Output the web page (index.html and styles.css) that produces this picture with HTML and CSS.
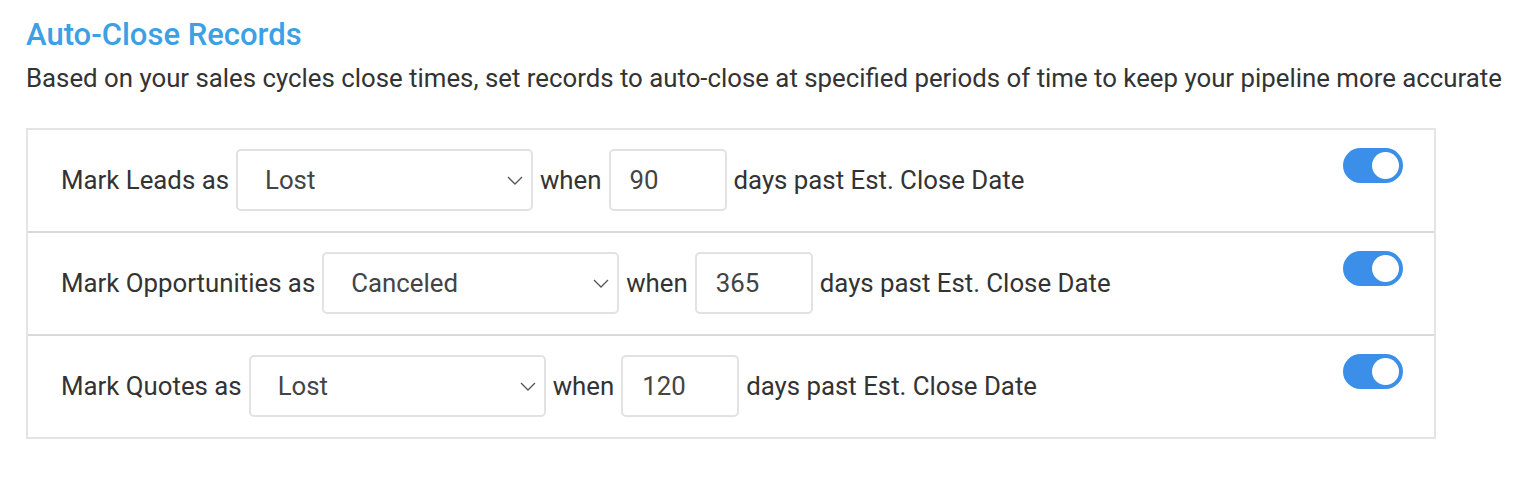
FILE: index.html
```html
<!DOCTYPE html>
<html lang="en">
<head>
<meta charset="utf-8">
<title>Auto-Close Records</title>
<link rel="stylesheet" href="styles.css">
</head>
<body>
<section class="settings">
  <h2 class="settings-title">Auto-Close Records</h2>
  <p class="settings-desc">Based on your sales cycles close times, set records to auto-close at specified periods of time to keep your pipeline more accurate</p>

  <div class="rules">
    <div class="rule">
      <div class="rule-line">
        <span class="rule-text">Mark Leads as</span>
        <div class="select">
          <span class="select-value">Lost</span>
          <svg class="chevron" viewBox="0 0 16 9" width="16" height="9"><path d="M1 1l7 7 7-7" fill="none" stroke="#555" stroke-width="1.3"/></svg>
        </div>
        <span class="rule-text">when</span>
        <div class="num-input">90</div>
        <span class="rule-text">days past Est. Close Date</span>
      </div>
      <span class="toggle on"><span class="knob"></span></span>
    </div>

    <div class="rule">
      <div class="rule-line">
        <span class="rule-text">Mark Opportunities as</span>
        <div class="select">
          <span class="select-value">Canceled</span>
          <svg class="chevron" viewBox="0 0 16 9" width="16" height="9"><path d="M1 1l7 7 7-7" fill="none" stroke="#555" stroke-width="1.3"/></svg>
        </div>
        <span class="rule-text">when</span>
        <div class="num-input">365</div>
        <span class="rule-text">days past Est. Close Date</span>
      </div>
      <span class="toggle on"><span class="knob"></span></span>
    </div>

    <div class="rule">
      <div class="rule-line">
        <span class="rule-text">Mark Quotes as</span>
        <div class="select">
          <span class="select-value">Lost</span>
          <svg class="chevron" viewBox="0 0 16 9" width="16" height="9"><path d="M1 1l7 7 7-7" fill="none" stroke="#555" stroke-width="1.3"/></svg>
        </div>
        <span class="rule-text">when</span>
        <div class="num-input">120</div>
        <span class="rule-text">days past Est. Close Date</span>
      </div>
      <span class="toggle on"><span class="knob"></span></span>
    </div>
  </div>
</section>
</body>
</html>
```

FILE: styles.css
```css
html, body {
  margin: 0;
  background: #fff;
}

body {
  font-family: Roboto, "Liberation Sans", Arial, sans-serif;
  color: #333;
}

.settings {
  padding: 17px 26px 0;
  width: 1410px;
}

.settings-title {
  margin: 0;
  font-size: 31px;
  font-weight: 500;
  line-height: 36px;
  color: #3ca0e5;
}

.settings-desc {
  margin: 9px 0 0;
  font-size: 25.8px;
  line-height: 32px;
  color: #333;
  white-space: nowrap;
}

.rules {
  margin-top: 34px;
  border: 2px solid #e4e4e4;
}

.rule {
  display: flex;
  justify-content: space-between;
  align-items: flex-start;
  height: 101px;
  padding: 0 31px 0 33px;
  border-top: 2px solid #d9d9d9;
}

.rule:first-child {
  border-top: none;
}

.rule-line {
  display: flex;
  align-items: center;
  gap: 7px;
  padding-top: 19px;
}

.rule-text {
  font-size: 25.8px;
  color: #333;
}

.select {
  display: flex;
  align-items: center;
  justify-content: space-between;
  box-sizing: border-box;
  width: 297px;
  height: 62px;
  padding: 0 8px 0 27px;
  border: 2px solid #e2e2e2;
  border-radius: 5px;
  font-size: 25.8px;
  color: #444;
}

.chevron {
  display: block;
}

.num-input {
  display: flex;
  align-items: center;
  box-sizing: border-box;
  width: 118px;
  height: 62px;
  padding: 0 19px;
  border: 2px solid #e2e2e2;
  border-radius: 5px;
  font-size: 25.8px;
  color: #444;
}

.toggle {
  position: relative;
  display: block;
  width: 60px;
  height: 35px;
  margin-top: 18px;
  border-radius: 18px;
  background: #3b8fe8;
}

.toggle .knob {
  position: absolute;
  top: 4px;
  right: 4px;
  width: 27px;
  height: 27px;
  border-radius: 50%;
  background: #fff;
}
```
